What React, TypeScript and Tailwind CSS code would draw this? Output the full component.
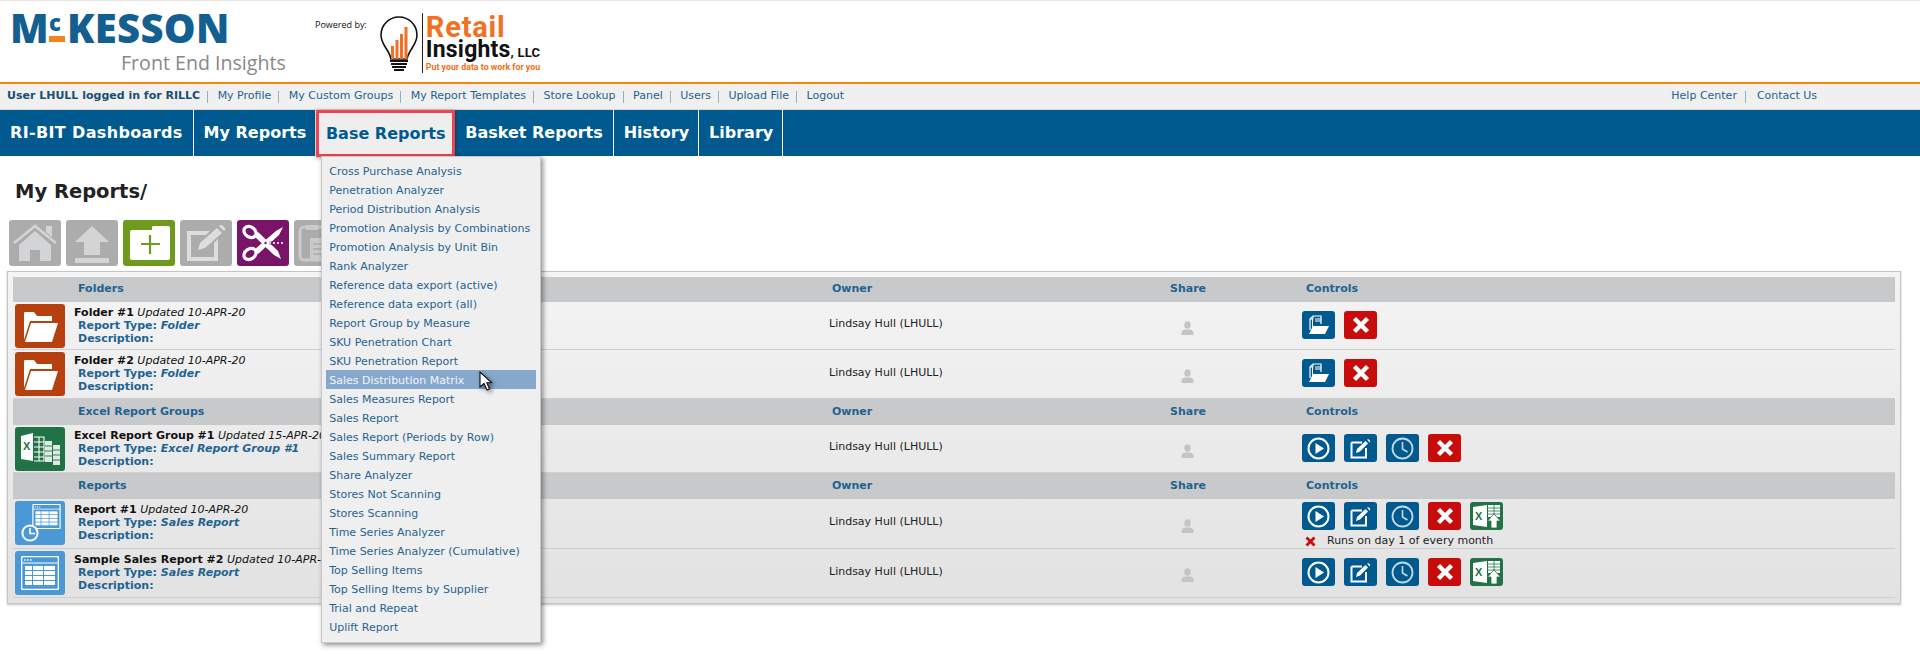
import type { ReactNode } from 'react';

const navItems = ['RI-BIT Dashboards', 'My Reports', 'Base Reports', 'Basket Reports', 'History', 'Library'];
const topLinks = ['My Profile', 'My Custom Groups', 'My Report Templates', 'Store Lookup', 'Panel', 'Users', 'Upload File', 'Logout'];
const menuItems = [
  'Cross Purchase Analysis',
  'Penetration Analyzer',
  'Period Distribution Analysis',
  'Promotion Analysis by Combinations',
  'Promotion Analysis by Unit Bin',
  'Rank Analyzer',
  'Reference data export (active)',
  'Reference data export (all)',
  'Report Group by Measure',
  'SKU Penetration Chart',
  'SKU Penetration Report',
  'Sales Distribution Matrix',
  'Sales Measures Report',
  'Sales Report',
  'Sales Report (Periods by Row)',
  'Sales Summary Report',
  'Share Analyzer',
  'Stores Not Scanning',
  'Stores Scanning',
  'Time Series Analyzer',
  'Time Series Analyzer (Cumulative)',
  'Top Selling Items',
  'Top Selling Items by Supplier',
  'Trial and Repeat',
  'Uplift Report',
];

function RetailLogo() {
  return (
    <div className="flex items-stretch h-[60px] ml-[12px] mt-[12px]">
      <svg width="40" height="58" viewBox="0 0 40 58" className="mt-[2px]">
        <path d="M12 44 C10 34 2 30 2 20 A18 18 0 0 1 38 20 C38 30 30 34 28 44 Z" fill="none" stroke="#111" strokeWidth="1.6" />
        <rect x="12" y="31" width="3" height="13" fill="#f36f21" />
        <rect x="16.5" y="25" width="3" height="19" fill="#f36f21" />
        <rect x="21" y="19" width="3" height="25" fill="#f36f21" />
        <rect x="25.5" y="12" width="3" height="32" fill="#f36f21" />
        <rect x="11" y="45" width="18" height="2" fill="#111" />
        <rect x="12" y="48" width="16" height="2" fill="#111" />
        <rect x="13" y="51" width="14" height="2" fill="#111" />
        <rect x="15" y="54" width="10" height="2" fill="#111" />
      </svg>
      <div className="w-px bg-[#222] ml-[3px] mr-[3px]" />
      <div className="flex flex-col pt-[2px] font-['Roboto',sans-serif]">
        <div className="text-[29px] leading-[25px] font-bold text-[#f36f21] tracking-[0.8px]">Retail</div>
        <div className="text-[23px] leading-[19px] font-bold text-[#111] tracking-[0.2px] whitespace-nowrap">
          Insights<span className="text-[13px]">, LLC</span>
        </div>
        <div className="text-[8.8px] leading-[10px] font-bold text-[#f36f21] whitespace-nowrap">Put your data to work for you</div>
      </div>
    </div>
  );
}

function Header() {
  return (
    <div className="h-[82px] flex border-t border-[#e5e5e5] bg-white">
      <div className="w-[304px] pl-[10px] pt-[11px]">
        <div className="flex items-center h-[31px] font-['Open_Sans',sans-serif] text-[40px] leading-[31px] font-extrabold text-[#136090] whitespace-nowrap tracking-[0.3px]">
          M
          <span className="flex flex-col justify-between h-[29px] w-[18px] text-[22px] leading-[18px]">
            <span>c</span>
            <span className="block h-[6px] w-[16px] bg-[#f58220]" />
          </span>
          KESSON
        </div>
        <div className="font-['Open_Sans',sans-serif] text-[19.6px] leading-[27px] text-[#888] pl-[111px] pt-[6px] whitespace-nowrap">Front End Insights</div>
      </div>
      <div className="text-[9px] text-[#111] pt-[17px] ml-[11px] font-['Open_Sans',sans-serif] whitespace-nowrap">Powered by:</div>
      <RetailLogo />
    </div>
  );
}

function TopBar() {
  return (
    <div className="h-[28px] border-t-2 border-[#ef8a10] border-b border-b-[#d5d5d5] bg-[#f0f0f0] flex items-center justify-between pl-[7px] pr-[103px] text-[11px] text-[#1f6391] whitespace-nowrap">
      <div className="flex items-center">
        <span className="font-bold text-[#1b4f72]">User LHULL logged in for RILLC</span>
        {topLinks.map((l) => (
          <span key={l} className="flex items-center">
            <span className="w-px h-[12px] bg-[#8fb0c8] ml-[7px] mr-[9.5px]" />
            {l}
          </span>
        ))}
      </div>
      <div className="flex items-center">
        Help Center
        <span className="w-px h-[12px] bg-[#8fb0c8] ml-[8px] mr-[11px]" />
        Contact Us
      </div>
    </div>
  );
}

function MenuDropdown() {
  return (
    <div className="absolute left-[5px] top-[46px] z-20 w-[220px] h-[487px] bg-[#efefef] border border-[#c8c8c8] shadow-[2px_2px_5px_rgba(0,0,0,0.45)] pt-[4px] px-[4px] font-normal">
      {menuItems.map((m) => (
        <div
          key={m}
          className={
            m === 'Sales Distribution Matrix'
              ? 'relative h-[19px] leading-[21px] pl-[3px] text-[11px] whitespace-nowrap bg-[#85a8cc] text-[#f2f6fa]'
              : 'h-[19px] leading-[21px] pl-[3px] text-[11px] whitespace-nowrap text-[#1f6391]'
          }
        >
          {m}
          {m === 'Sales Distribution Matrix' && (
            <svg width="16" height="22" viewBox="0 0 16 22" className="absolute left-[153px] top-[1px] drop-shadow-[2px_2px_2px_rgba(0,0,0,0.5)]">
              <path d="M1 1 L1 16 L5 12.5 L8 19 L10.5 18 L7.8 11.8 L12.5 11.5 Z" fill="#fff" stroke="#111" strokeWidth="1.1" />
            </svg>
          )}
        </div>
      ))}
    </div>
  );
}

const navCell: { [key: string]: string } = {
  'RI-BIT Dashboards': 'h-full flex items-center px-[10px] border-r border-white tracking-[0.35px]',
  'My Reports': 'h-full flex items-center pl-[10px] pr-[9px] border-r border-white',
  'Basket Reports': 'h-full flex items-center px-[10px] border-r border-white',
  History: 'h-full flex items-center pl-[10px] pr-[9px] border-r border-white',
  Library: 'h-full flex items-center pl-[10px] pr-[9px] border-r border-white',
};

function Nav() {
  return (
    <div className="h-[46px] bg-[#005a8f] flex text-[16px] font-bold text-white whitespace-nowrap">
      {navItems.map((n) =>
        n === 'Base Reports' ? (
          <div key={n} className="relative">
            <div className="h-[47px] w-[139px] bg-[#eeeeee] border-[3px] border-[#ef4450] text-[#005a8f] flex items-center justify-center shadow-[0_1px_4px_rgba(0,0,0,0.4)]">
              {n}
            </div>
            <MenuDropdown />
          </div>
        ) : (
          <div key={n} className={navCell[n]}>
            {n}
          </div>
        ),
      )}
    </div>
  );
}

function Tile({ bg, w = 52, h = 46, children }: { bg: string; w?: number; h?: number; children: ReactNode }) {
  return (
    <div className="rounded-[3px] flex items-center justify-center shrink-0" style={{ background: bg, width: w, height: h }}>
      {children}
    </div>
  );
}

function HomeIcon() {
  return (
    <svg width="46" height="40" viewBox="0 0 46 40">
      <path d="M2 20 L23 3 L44 20" fill="none" stroke="#d3d4d5" strokeWidth="2.6" />
      <path d="M34 3 H40 V14 L34 9 Z" fill="#d3d4d5" />
      <path d="M7 22 L23 8 L39 22 V38 H28 V27 H18 V38 H7 Z" fill="#d3d4d5" />
    </svg>
  );
}

function UploadIcon() {
  return (
    <svg width="40" height="40" viewBox="0 0 40 40">
      <path d="M20 3 L37 19 H28 V32 H12 V19 H3 Z" fill="#d3d4d5" />
      <rect x="3" y="35" width="34" height="5" fill="#d3d4d5" />
    </svg>
  );
}

function NewFolderIcon() {
  return (
    <svg width="42" height="34" viewBox="0 0 42 34">
      <path d="M2 6 Q2 4 4 4 H24 V1 Q24 0 26 0 H40 Q42 0 42 2 V32 Q42 34 40 34 H4 Q2 34 2 32 Z" fill="#fff" />
      <path d="M22 9 V28 M13 18 H32" stroke="#6e9a1e" strokeWidth="2.2" />
    </svg>
  );
}

function EditBigIcon() {
  return (
    <svg width="44" height="38" viewBox="0 0 44 38">
      <path d="M3 7 H26 L22 11 H7 V33 H30 V19 L34 15 V37 H3 Z" fill="#dcdddd" />
      <path d="M14 26 L16 19 L33 4 L38 9 L21 24 Z" fill="#dcdddd" />
      <path d="M35 2 Q37 0 39 2 L41 4 Q42 6 40 7 Z" fill="#dcdddd" />
    </svg>
  );
}

function ScissorsIcon() {
  return (
    <svg width="42" height="38" viewBox="0 0 42 38">
      <ellipse cx="8" cy="8" rx="6.5" ry="5" transform="rotate(35 8 8)" fill="none" stroke="#fff" strokeWidth="3.2" />
      <ellipse cx="8" cy="30" rx="6.5" ry="5" transform="rotate(-35 8 30)" fill="none" stroke="#fff" strokeWidth="3.2" />
      <path d="M12 26 L34 7 L41 3 L37 11 L16 30 Z" fill="#fff" />
      <path d="M12 12 L16 8 L36 27 L39 35 L32 31 Z" fill="#fff" />
      <circle cx="23.5" cy="19" r="1.2" fill="#7a1468" />
      <path d="M27 19 H41" stroke="#7a1468" strokeWidth="2.6" />
      <path d="M27 19 H41" stroke="#fff" strokeWidth="1.4" strokeDasharray="2 2" />
    </svg>
  );
}

function CopyIcon() {
  return (
    <svg width="44" height="38" viewBox="0 0 44 38">
      <rect x="2" y="3" width="24" height="33" rx="4" fill="none" stroke="#c9caca" strokeWidth="3" />
      <rect x="8" y="1" width="12" height="5" fill="#c9caca" />
      <rect x="12" y="14" width="24" height="23" fill="#c9caca" />
      <path d="M15 20 H33 M15 25 H33 M15 30 H33" stroke="#aaa" strokeWidth="1.4" />
    </svg>
  );
}

function FolderOpenIcon() {
  return (
    <svg width="38" height="34" viewBox="0 0 38 34">
      <path d="M3 31 V4 Q3 3 4 3 H13 L16 7 H31 V12 H9 Z" fill="#fff" />
      <path d="M4 33 L10 14 H37 L31 33 Z" fill="#fff" />
    </svg>
  );
}

function ExcelGroupIcon() {
  return (
    <svg width="40" height="32" viewBox="0 0 40 32">
      <path d="M1 3 L13 0 V28 L1 26 Z" fill="#fff" />
      <text x="3" y="17" fontSize="11" fontWeight="700" fontFamily="Liberation Sans" fill="#217346">X</text>
      <g fill="none" stroke="#fff" strokeWidth="1.1">
        <path d="M14 4 H24 V28 H14 M14 9 H24 M14 14 H24 M14 19 H24 M14 24 H24 M19 4 V28" />
      </g>
      <rect x="25" y="8" width="7" height="21" fill="#fff" opacity="0.85" />
      <rect x="33" y="12" width="7" height="20" fill="#fff" opacity="0.85" />
      <path d="M25 13 H32 M25 18 H32 M25 23 H32 M33 17 H40 M33 22 H40 M33 27 H40" stroke="#217346" strokeWidth="0.9" />
    </svg>
  );
}

function TablePanel({ w, h }: { w: number; h: number }) {
  return (
    <svg width={w} height={h} viewBox="0 0 38 34">
      <rect x="0.5" y="0.5" width="37" height="33" rx="1.5" fill="none" stroke="#fff" strokeWidth="1.6" />
      <path d="M0 7 H38" stroke="#fff" strokeWidth="1" />
      <path d="M3 4 H4.5 M6 4 H7.5 M9 4 H10.5" stroke="#fff" strokeWidth="1.4" />
      <g fill="#fff">
        <rect x="4" y="10" width="7" height="4" /><rect x="12" y="10" width="10" height="4" /><rect x="23" y="10" width="11" height="4" />
        <rect x="4" y="15" width="7" height="4" /><rect x="12" y="15" width="10" height="4" /><rect x="23" y="15" width="11" height="4" />
        <rect x="4" y="20" width="7" height="4" /><rect x="12" y="20" width="10" height="4" /><rect x="23" y="20" width="11" height="4" />
        <rect x="4" y="25" width="7" height="4" /><rect x="12" y="25" width="10" height="4" /><rect x="23" y="25" width="11" height="4" />
      </g>
    </svg>
  );
}

function ReportClockIcon() {
  return (
    <div className="relative w-[50px] h-[44px] rounded-[3px] bg-[#4a98d6] shrink-0">
      <div className="absolute right-[4px] top-[3px]">
        <TablePanel w={29} h={25} />
      </div>
      <svg width="20" height="20" viewBox="0 0 20 20" className="absolute left-[5px] bottom-[2px]">
        <circle cx="10" cy="10" r="7.6" fill="#4a98d6" stroke="#fff" strokeWidth="2" />
        <path d="M10 5 V10.5 H15" fill="none" stroke="#fff" strokeWidth="1.6" />
      </svg>
    </div>
  );
}

function RowIcon({ kind }: { kind: string }) {
  if (kind === 'folder') {
    return <Tile bg="#b7410e" w={50} h={44}><FolderOpenIcon /></Tile>;
  }
  if (kind === 'excel') {
    return <Tile bg="#217346" w={50} h={44}><ExcelGroupIcon /></Tile>;
  }
  if (kind === 'clock') {
    return <ReportClockIcon />;
  }
  return <Tile bg="#4a98d6" w={50} h={44}><TablePanel w={38} h={34} /></Tile>;
}

function Ctl({ bg = '#005a8f', children }: { bg?: string; children: ReactNode }) {
  return <Tile bg={bg} w={33} h={28}>{children}</Tile>;
}

function OpenBtn() {
  return (
    <Ctl>
      <svg width="22" height="20" viewBox="0 0 22 20">
        <path d="M2 15 V4 L5 1 H13 V9" fill="none" stroke="#fff" strokeWidth="1.2" />
        <path d="M4.5 4 V14 M7 4 H13 M7 6 H13 M5 1 V4 H2" fill="none" stroke="#fff" strokeWidth="1" />
        <path d="M1 19 L5 11 H21 L17 19 Z" fill="#fff" />
      </svg>
    </Ctl>
  );
}

function DeleteBtn() {
  return (
    <Ctl bg="#c80c0c">
      <svg width="18" height="18" viewBox="0 0 18 18">
        <path d="M2.5 2.5 L15.5 15.5 M15.5 2.5 L2.5 15.5" stroke="#fff" strokeWidth="4.4" />
      </svg>
    </Ctl>
  );
}

function RunBtn() {
  return (
    <Ctl>
      <svg width="23" height="23" viewBox="0 0 23 23">
        <circle cx="11.5" cy="11.5" r="10" fill="none" stroke="#fff" strokeWidth="2" />
        <path d="M8.5 6 L17 11.5 L8.5 17 Z" fill="#fff" />
      </svg>
    </Ctl>
  );
}

function EditBtn() {
  return (
    <Ctl>
      <svg width="22" height="21" viewBox="0 0 22 21">
        <path d="M1.5 4.5 H12 M16 10 V19.5 H1.5 V4.5" fill="none" stroke="#fff" strokeWidth="2" />
        <path d="M6 15 L7 11 L15.5 3 L18 5.5 L10 13.5 Z" fill="#fff" />
        <path d="M17 1.6 Q18 .8 19 1.6 L20 2.8 Q20.6 3.6 19.6 4.4 Z" fill="#fff" />
      </svg>
    </Ctl>
  );
}

function ClockBtn() {
  return (
    <Ctl>
      <svg width="23" height="23" viewBox="0 0 23 23">
        <circle cx="11.5" cy="11.5" r="10" fill="none" stroke="#c5d8e6" strokeWidth="1.8" />
        <path d="M11.5 5 V12 L16.5 15" fill="none" stroke="#c5d8e6" strokeWidth="1.6" />
      </svg>
    </Ctl>
  );
}

function XlsBtn() {
  return (
    <Ctl bg="#217346">
      <svg width="29" height="26" viewBox="0 0 29 26">
        <path d="M1 4 L15 2 V24 L1 22 Z" fill="#fff" />
        <text x="3" y="17" fontSize="11" fontWeight="700" fontFamily="Liberation Sans" fill="#217346">X</text>
        <rect x="16" y="2" width="12" height="12" fill="#fff" />
        <path d="M16 5 H28 M16 8 H28 M16 11 H28 M22 2 V14" stroke="#217346" strokeWidth="0.8" />
        <path d="M22 11 L28.5 18 H25 V25 H19 V18 H15.5 Z" fill="#fff" stroke="#217346" strokeWidth="0.8" />
      </svg>
    </Ctl>
  );
}

function PersonIcon() {
  return (
    <svg width="13" height="14" viewBox="0 0 13 14">
      <ellipse cx="6.5" cy="4" rx="3.2" ry="3.8" fill="#c4c4c4" />
      <path d="M0.5 14 V11.5 Q0.5 9.5 4 8.5 H9 Q12.5 9.5 12.5 11.5 V14 Z" fill="#c4c4c4" />
    </svg>
  );
}

function SectionHead({ title, h }: { title: string; h: string }) {
  return (
    <div className={`${h} bg-[#c8c9cb] flex items-center text-[11px] font-bold text-[#1f6391]`}>
      <div className="w-[816px] pl-[65px]">{title}</div>
      <div className="w-[341px] pl-[3px]">Owner</div>
      <div className="w-[132px]">Share</div>
      <div className="pl-[4px]">Controls</div>
    </div>
  );
}

function ReportRow({
  kind,
  name,
  updated,
  type,
  h,
  controls,
  note,
}: {
  kind: string;
  name: string;
  updated: string;
  type: string;
  h: string;
  controls: ReactNode;
  note?: string;
}) {
  return (
    <div className={`${h} flex items-start border-b border-[#cfcfcf] text-[11px]`}>
      <div className="w-[816px] flex items-start pl-[2px] pt-[2px] whitespace-nowrap">
        <RowIcon kind={kind} />
        <div className="pl-[9px] pt-[2px] leading-[13px]">
          <div className="text-[#111]">
            <span className="font-bold">{name}</span> <span className="italic">Updated {updated}</span>
          </div>
          <div className="pl-[4px] font-bold text-[#1f6391]">
            Report Type: <span className="italic">{type}</span>
          </div>
          <div className="pl-[4px] font-bold text-[#1f6391]">Description:</div>
        </div>
      </div>
      <div className="w-[341px] self-center text-[#222] -mt-[2px]">Lindsay Hull (LHULL)</div>
      <div className="w-[132px] self-center pl-[11px] pt-[4px]">
        <PersonIcon />
      </div>
      <div className={note ? 'pt-[3px]' : 'pt-[9px]'}>
        <div className="flex gap-[9px]">{controls}</div>
        {note && (
          <div className="flex items-center pl-[3px] pt-[3px] text-[#222] whitespace-nowrap">
            <svg width="11" height="11" viewBox="0 0 11 11" className="mr-[11px]">
              <path d="M1.5 1.5 L9.5 9.5 M9.5 1.5 L1.5 9.5" stroke="#c80c0c" strokeWidth="2.8" />
            </svg>
            {note}
          </div>
        )}
      </div>
    </div>
  );
}

export default function App() {
  const reportControls = (
    <>
      <RunBtn />
      <EditBtn />
      <ClockBtn />
      <DeleteBtn />
      <XlsBtn />
    </>
  );
  return (
    <div className="min-h-[664px] bg-white font-['DejaVu_Sans',sans-serif]">
      <Header />
      <TopBar />
      <Nav />
      <div className="text-[19.5px] font-bold text-[#222] pl-[15px] pt-[23px] leading-[26px]">My Reports/</div>
      <div className="flex gap-[5px] pl-[9px] pt-[15px]">
        <Tile bg="#acacac"><HomeIcon /></Tile>
        <Tile bg="#acacac"><UploadIcon /></Tile>
        <Tile bg="#6e9a1e"><NewFolderIcon /></Tile>
        <Tile bg="#acacac"><EditBigIcon /></Tile>
        <Tile bg="#7a1468"><ScissorsIcon /></Tile>
        <Tile bg="#acacac"><CopyIcon /></Tile>
      </div>
      <div className="mx-[7px] mt-[5px] w-[1894px] h-[333px] border border-[#c4c4c4] shadow-[0_1px_2px_rgba(0,0,0,0.25)] bg-linear-to-b from-[#f4f4f4] to-[#e2e2e2] px-[5px] pt-[5px]">
        <SectionHead title="Folders" h="h-[25px]" />
        <ReportRow kind="folder" name="Folder #1" updated="10-APR-20" type="Folder" h="h-[48px]" controls={<><OpenBtn /><DeleteBtn /></>} />
        <ReportRow kind="folder" name="Folder #2" updated="10-APR-20" type="Folder" h="h-[49px]" controls={<><OpenBtn /><DeleteBtn /></>} />
        <SectionHead title="Excel Report Groups" h="h-[26px]" />
        <ReportRow kind="excel" name="Excel Report Group #1" updated="15-APR-20" type="Excel Report Group #1" h="h-[48px]" controls={<><RunBtn /><EditBtn /><ClockBtn /><DeleteBtn /></>} />
        <SectionHead title="Reports" h="h-[26px]" />
        <ReportRow kind="clock" name="Report #1" updated="10-APR-20" type="Sales Report" h="h-[50px]" controls={reportControls} note="Runs on day 1 of every month" />
        <ReportRow kind="table" name="Sample Sales Report #2" updated="10-APR-20" type="Sales Report" h="h-[49px]" controls={reportControls} />
      </div>
    </div>
  );
}
